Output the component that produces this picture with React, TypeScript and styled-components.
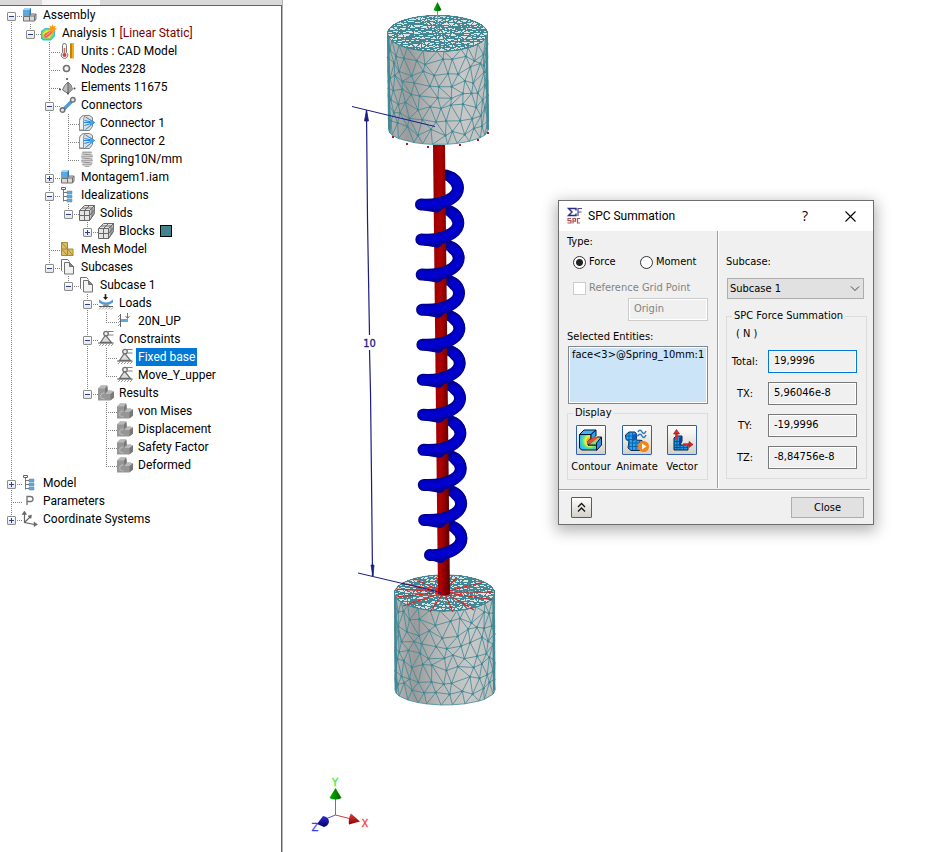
import React, { useState } from "react";
import styled, { createGlobalStyle, css } from "styled-components";

const uiFont = `Roboto, "Open Sans", sans-serif`;
const dialogFont = `"DejaVu Sans Condensed", "DejaVu Sans", sans-serif`;

const GlobalStyle = createGlobalStyle`
  *, *::before, *::after { box-sizing: border-box; }
  body { margin: 0; background: #fff; color: #000; font: 12px/18px ${uiFont}; }
  button, input, select { font: inherit; color: inherit; margin: 0; }
`;

/* ------------------------------------------------------------------ */
/* Page frame                                                          */
/* ------------------------------------------------------------------ */

const Page = styled.div`
  display: flex;
  min-height: 100vh;
`;

const Sidebar = styled.aside`
  flex: none;
  width: 283px;
  display: flex;
  flex-direction: column;
  border-right: 1px solid #b4b4b4;
`;

const TabStrip = styled.div`
  height: 5px;
  background: #d9d9d9;
  padding-left: 42px;
`;

const ActiveTab = styled.div`
  width: 58px;
  height: 5px;
  background: #f5f5f5;
`;

const TreePanel = styled.nav`
  flex: 1;
  border-top: 1px solid #646464;
  border-right: 1px solid #646464;
  padding-left: 2px;
`;

const Stage = styled.main`
  position: relative;
  flex: 1;
  min-width: 0;
  overflow: hidden;
`;

const SceneSvg = styled.svg`
  display: block;
`;

/* ------------------------------------------------------------------ */
/* Icons                                                               */
/* ------------------------------------------------------------------ */

const IconSvg = styled.svg`
  flex: none;
  width: 16px;
  height: 16px;
  display: block;
  overflow: visible;
`;

type IconName =
  | "assembly" | "analysis" | "units" | "node" | "element" | "connectors" | "connector"
  | "spring" | "list" | "solids" | "mesh" | "pages" | "loads" | "load" | "constraint"
  | "result" | "param" | "coords";

const drawings: Record<IconName, React.ReactNode> = {
  assembly: (
    <>
      <path d="M1 3l2-2h6v7l-1 1H1z" fill="#5aa9e0" />
      <path d="M1 3l2-2h6L7.500 3z" fill="#a6d3f3" />
      <path d="M7.500 3L9 1v7L7.500 9z" fill="#2b78b5" />
      <g stroke="#707070" fill="#d9d9d9" strokeLinejoin="round">
        <path d="M1.500 9.500h6v4.500h-6z" />
        <path d="M7.500 9l1.500-2h5v5l-1.500 2h-5z" />
        <path d="M7.500 9h5v5M12.500 9L14 7" fill="none" />
      </g>
    </>
  ),
  analysis: (
    <>
      <path d="M0 6l4-3h8l2 2v6l-4 4.500H2l-2-2z" fill="#2fc0e6" />
      <path d="M1 7l3-3h7l2 3v3l-3.500 4H3l-2-2z" fill="#7edc5a" />
      <path d="M2 8.500l3-3 5-.5 2 3-3.500 5H4z" fill="#f5e34a" />
      <path d="M3 10.500C4 7 7 8 8.500 5.500l3 .5c0 4-3 4-5 6.500-2 1-3.500 0-3.500-2z" fill="#f0685c" />
      <path d="M5 11c1-2 3-2 4.500-4.500" stroke="#f8a89c" fill="none" />
      <path d="M11.500-1l.9 2.600 2.400-1-1 2.400 2.400 1-2.400 1 1 2.400-2.400-1-.9 2.500-.9-2.500-2.400 1 1-2.400-2.400-1 2.400-1-1-2.400 2.400 1z" fill="#f59a1f" />
    </>
  ),
  units: (
    <>
      <path d="M2.500 2.500a2 2 0 014 0v7a3.300 3.300 0 11-4 0z" fill="#f4f4f4" stroke="#777" />
      <path d="M4.500 5v6" stroke="#c86c6c" strokeWidth="1.500" />
      <circle cx="4.500" cy="12" r="2" fill="#d04545" />
      <path d="M10 0h4v15.500h-4z" fill="#f5ad1c" />
      <path d="M10 2h2M10 4h2M10 6h2M10 8h2M10 10h2M10 12h2M10 14h2" stroke="#8a5a00" />
    </>
  ),
  node: <circle cx="6.500" cy="7.500" r="3" fill="#f4f4f4" stroke="#707070" strokeWidth="1.600" />,
  element: (
    <>
      <path d="M8 3Q4 6 2.500 11L8 14.500l4.500-4Q12 6 8 3z" fill="#bdbdbd" stroke="#707070" />
      <path d="M8 3q3.500 3 4.500 7.500L8 14.500z" fill="#a0a0a0" />
      <path d="M8 3v11.500" stroke="#606060" />
      <g fill="#444">
        <circle cx="7" cy="0" r="1" /><circle cx="0" cy="10.500" r="1" />
        <circle cx="14.500" cy="9.500" r="1" /><circle cx="8" cy="14.500" r="1" />
      </g>
    </>
  ),
  connectors: (
    <>
      <path d="M3.500 12.500L12 4" stroke="#4f9bd9" strokeWidth="3.400" />
      <circle cx="2.500" cy="13" r="2.300" fill="#e4e4e4" stroke="#707070" strokeWidth="1.400" />
      <circle cx="12.800" cy="2.800" r="2.300" fill="#e4e4e4" stroke="#707070" strokeWidth="1.400" />
    </>
  ),
  connector: (
    <>
      <path d="M.5 15V5.500Q1.500.500 6 .5h4.500l3 2v9l-3 4H.500z" fill="#dedede" stroke="#808080" />
      <path d="M.5 15V5.500Q1.500.500 6 .5q-1.500 2-1.500 5V15z" fill="#f2f2f2" stroke="#909090" />
      <path d="M15.500 7.500L6.500 2M15.500 7.500L5.500 5.500M15.500 7.500H5M15.500 7.500l-10 3M15.500 7.500l-9 7" stroke="#1e88e5" />
      <path d="M11 4.500l5 3-5 3.500" fill="#4aa0ec" />
    </>
  ),
  spring: (
    <g fill="none" strokeLinecap="round">
      <path d="M3 3l10 1M3 7l10 1M3 11l10 1" stroke="#8c8c8c" strokeWidth="1.200" />
      <path d="M4 1.500h8M3 5.500h10M3 9.500h10M4 13.500h8" stroke="#a8a8a8" strokeWidth="1.800" />
      <path d="M6 15.500h4" stroke="#a8a8a8" />
    </g>
  ),
  list: (
    <>
      <path d="M3.500 3v11.500M3.500 5.500h4M3.500 9.500h4M3.500 13.500h4" stroke="#777" fill="none" />
      <path d="M1.500.5h4v2h-4z" fill="#fff" stroke="#666" />
      <path d="M7 4h5v3H7zM7 8h5v3H7zM7 12h5v3H7z" fill="#5aa9e0" stroke="#5b8fb5" strokeWidth=".5" />
    </>
  ),
  solids: (
    <g stroke="#686868" strokeLinejoin="round">
      <path d="M.5 5.500L5.500.500H15.500L15 9l-4.500 6.500H.500z" fill="#e4e4e4" />
      <path d="M10.500 5.500l5-5L15 9l-4.500 6.500z" fill="#c6c6c6" />
      <path d="M5.500 5.500l5-5M3 3h10v9M.5 5.500h10v10M5.500 5.500v10M.5 10.500h10l4.800-5.500" fill="none" />
    </g>
  ),
  mesh: (
    <g fill="#dbbd63" stroke="#a88a35">
      <path d="M1.500 1.500h6v6.500h5.500v6.500H1.500zM1.500 8h6M7.500 8v6.500M1.500 1.500L7.500 8M1.500 8l6 6.500M7.500 8l5.500 6.500" />
    </g>
  ),
  pages: (
    <g stroke="#707070">
      <path d="M2.500 12.500l-1-1V.5h6l2 2" fill="#fff" />
      <path d="M4.500 3.500h5l4 4v7.500h-9z" fill="#f2f2f2" />
      <path d="M9.500 3.500v4h4z" fill="#888" />
    </g>
  ),
  loads: (
    <>
      <path d="M1 4.500q7 6 14 0v3q-7 5-14 0z" fill="#4f9bd9" />
      <path d="M4.500 11L8 8l3.500 3z" fill="#909090" />
      <path d="M7.500-1v5" stroke="#222" strokeWidth="1.600" />
      <path d="M5 2h5L7.500 5z" fill="#222" />
      <path d="M1 11.500h14" stroke="#555" />
      <path d="M1 14.500l3-3M4 14.500l3-3M7 14.500l3-3M10 14.500l3-3M13 14.500l2-2" stroke="#999" />
    </>
  ),
  load: (
    <>
      <path d="M3.500 1v13" stroke="#666" />
      <path d="M1 4l2-2M1 7l2-2M1 10l2-2M1 13l2-2" stroke="#999" />
      <path d="M4 6h7v3H4z" fill="#5aa9e0" />
      <path d="M10.500 0v5M8.500 3l2 2.500 2-2.500" stroke="#777" fill="none" />
    </>
  ),
  constraint: (
    <>
      <path d="M7.500 4L2.500 11.500h11z" fill="#ddd" stroke="#707070" strokeWidth="1.300" />
      <circle cx="8" cy="2.600" r="2.300" fill="#eee" stroke="#707070" strokeWidth="1.300" />
      <path d="M10 .5h5.500M10 4h5.500" stroke="#808080" />
      <path d="M0 12h15.500" stroke="#606060" />
      <path d="M1 15l3-3M4 15l3-3M7 15l3-3M10 15l3-3M13 15l2.500-2.500" stroke="#999" />
    </>
  ),
  result: (
    <>
      <path d="M0 3.500L3 .500h6l1 5h3.500l2.500 1v6l-4 3H0z" fill="#969696" />
      <path d="M0 3.500L3 .500h6L7 3.500zM7 9l3-3h6l-3 3z" fill="#b9b9b9" />
      <path d="M7 3.500L9.500.500v5L7 9zM12.500 9L16 6.500v6l-3.500 3z" fill="#787878" />
      <path d="M2.500 11.500a3.500 3.500 0 014-3.500M2.500 11.500a3 3 0 004 2" fill="none" stroke="#b0b0b0" strokeWidth="1.500" />
    </>
  ),
  param: <path d="M5 12V3.500h3.500a2.500 2.500 0 010 5H5" fill="none" stroke="#707070" strokeWidth="1.300" />,
  coords: (
    <g stroke="#666" fill="none" strokeWidth="1.200">
      <path d="M2.500 2v9.500l10 2M2.500 11.500L8.500 5.500" />
      <path d="M0 3.500L2.500 0 4.500 3.500zM12 11l3.500 2.500-3.500 2zM6 5l3.500-1-.5 3.500z" fill="#666" strokeWidth=".5" />
    </g>
  ),
};

const Icon = ({ name }: { name: IconName }) => (
  <IconSvg viewBox="0 0 16 16" aria-hidden="true">{drawings[name]}</IconSvg>
);

/* ------------------------------------------------------------------ */
/* Tree                                                                */
/* ------------------------------------------------------------------ */

const dotsDown = "repeating-linear-gradient(to bottom, #808080 0 1px, transparent 1px 2px)";
const dotsAcross = "repeating-linear-gradient(to right, #808080 0 1px, transparent 1px 2px)";

const TreeList = styled.ul`
  list-style: none;
  margin: 0;
  padding: 0;
`;

const TreeRow = styled.div`
  display: flex;
  align-items: center;
  height: 18px;
  white-space: nowrap;
`;

const Guide = styled.span<{ $on: boolean }>`
  flex: none;
  width: 19px;
  height: 18px;
  ${(p) => p.$on && css`background: ${dotsDown} 9px 0 / 1px 18px no-repeat;`}
`;

const Branch = styled.span<{ $up: boolean; $down: boolean }>`
  flex: none;
  display: flex;
  width: 20px;
  height: 18px;
  padding: 6px 0 0 5px;
  background:
    ${dotsAcross} 9px 10px / 11px 1px no-repeat,
    ${dotsDown} 9px ${(p) => (p.$up ? 0 : 10)}px / 1px
      ${(p) => (p.$up ? (p.$down ? 18 : 10) : p.$down ? 8 : 0)}px no-repeat;
`;

const Expander = styled.button`
  width: 9px;
  height: 9px;
  padding: 0;
  border: 1px solid #8c8c8c;
  border-radius: 1px;
  background: linear-gradient(#fff, #e4e4e4);
  display: grid;
  place-items: center;
`;

const ExpanderSvg = styled.svg`
  display: block;
  width: 7px;
  height: 7px;
`;

const Label = styled.span<{ $selected?: boolean }>`
  height: 18px;
  line-height: 18px;
  margin-left: 3px;
  padding: 0 2px;
  ${(p) => p.$selected && css`background: #0078d7; color: #fff;`}
`;

const Suffix = styled.span`
  color: #800000;
`;

const Swatch = styled.span`
  width: 12px;
  height: 12px;
  margin-left: 3px;
  border: 1px solid #000;
  background: #41838f;
`;

type Node = {
  label: string;
  icon: IconName;
  suffix?: string;
  swatch?: boolean;
  selected?: boolean;
  closed?: boolean;
  children?: Node[];
};

const tree: Node[] = [
  {
    label: "Assembly", icon: "assembly", children: [
      {
        label: "Analysis 1", suffix: "[Linear Static]", icon: "analysis", children: [
          { label: "Units : CAD Model", icon: "units" },
          { label: "Nodes 2328", icon: "node" },
          { label: "Elements 11675", icon: "element" },
          {
            label: "Connectors", icon: "connectors", children: [
              { label: "Connector 1", icon: "connector" },
              { label: "Connector 2", icon: "connector" },
              { label: "Spring10N/mm", icon: "spring" },
            ],
          },
          { label: "Montagem1.iam", icon: "assembly", closed: true, children: [] },
          {
            label: "Idealizations", icon: "list", children: [
              {
                label: "Solids", icon: "solids", children: [
                  { label: "Blocks", icon: "solids", swatch: true, closed: true, children: [] },
                ],
              },
            ],
          },
          { label: "Mesh Model", icon: "mesh" },
          {
            label: "Subcases", icon: "pages", children: [
              {
                label: "Subcase 1", icon: "pages", children: [
                  { label: "Loads", icon: "loads", children: [{ label: "20N_UP", icon: "load" }] },
                  {
                    label: "Constraints", icon: "constraint", children: [
                      { label: "Fixed base", icon: "constraint", selected: true },
                      { label: "Move_Y_upper", icon: "constraint" },
                    ],
                  },
                  {
                    label: "Results", icon: "result", children: [
                      { label: "von Mises", icon: "result" },
                      { label: "Displacement", icon: "result" },
                      { label: "Safety Factor", icon: "result" },
                      { label: "Deformed", icon: "result" },
                    ],
                  },
                ],
              },
            ],
          },
        ],
      },
    ],
  },
  { label: "Model", icon: "list", closed: true, children: [] },
  { label: "Parameters", icon: "param" },
  { label: "Coordinate Systems", icon: "coords", closed: true, children: [] },
];

type ItemProps = { node: Node; guides: boolean[]; first: boolean; last: boolean };

const TreeItem = ({ node, guides, first, last }: ItemProps) => {
  const [open, setOpen] = useState(!node.closed);
  return (
    <li>
      <TreeRow>
        {guides.map((on, i) => <Guide key={i} $on={on} />)}
        <Branch $up={!first} $down={!last}>
          {node.children && (
            <Expander
              type="button"
              aria-expanded={open}
              aria-label={`Toggle ${node.label}`}
              onClick={() => setOpen(!open)}
            >
              <ExpanderSvg viewBox="0 0 7 7">
                <path d={open ? "M1 3h5v1H1z" : "M1 3h5v1H1zM3 1h1v5H3z"} fill="#2b3f8f" />
              </ExpanderSvg>
            </Expander>
          )}
        </Branch>
        <Icon name={node.icon} />
        <Label $selected={node.selected}>
          {node.label}
          {node.suffix && <Suffix> {node.suffix}</Suffix>}
        </Label>
        {node.swatch && <Swatch />}
      </TreeRow>
      {open && node.children && node.children.length > 0 && (
        <TreeList>
          {node.children.map((child, i) => (
            <TreeItem
              key={child.label}
              node={child}
              guides={[...guides, !last]}
              first={false}
              last={i === node.children!.length - 1}
            />
          ))}
        </TreeList>
      )}
    </li>
  );
};

/* ------------------------------------------------------------------ */
/* 3D scene                                                            */
/* ------------------------------------------------------------------ */

type Point = [number, number];

const randomFrom = (seed: number) => {
  let s = seed;
  return () => {
    s = (s * 1664525 + 1013904223) % 4294967296;
    return s / 4294967296 - 0.5;
  };
};

const seg = (a: Point, b: Point) =>
  `M${a[0].toFixed(1)} ${a[1].toFixed(1)}L${b[0].toFixed(1)} ${b[1].toFixed(1)}`;

/* Triangulated front of a cylinder wall. */
const wallMesh = (cx: number, cy: number, h: number, shift: number, seed: number) => {
  const rnd = randomFrom(seed);
  const cols = 12;
  const rows = 8;
  const grid: Point[][] = [];
  for (let r = 0; r <= rows; r++) {
    const line: Point[] = [];
    for (let c = 0; c <= cols; c++) {
      const edge = c === 0 || c === cols;
      const rim = r === 0 || r === rows;
      const u = c + (edge ? 0 : (r % 2 ? 0.5 : 0) - 0.25 + rnd() * 0.6);
      const v = (r + (rim ? 0 : rnd() * 0.7)) / rows;
      const t = (u / cols) * Math.PI;
      line.push([cx + shift * v - 50 * Math.cos(t), cy + (18 - 3 * v) * Math.sin(t) + h * v]);
    }
    grid.push(line);
  }
  let d = "";
  for (let r = 0; r <= rows; r++) {
    for (let c = 0; c <= cols; c++) {
      if (c < cols) d += seg(grid[r][c], grid[r][c + 1]);
      if (r < rows) {
        d += seg(grid[r][c], grid[r + 1][c]);
        if (r % 2 === 0 && c > 0) d += seg(grid[r][c], grid[r + 1][c - 1]);
        if (r % 2 === 1 && c < cols) d += seg(grid[r][c], grid[r + 1][c + 1]);
      }
    }
  }
  return { d, dots: grid.slice(1, rows).flatMap((l) => l.slice(1, cols)) };
};

/* Triangulated cap: concentric rings joined to their neighbours. */
const capMesh = (cx: number, cy: number, seed: number) => {
  const rnd = randomFrom(seed);
  const rings: Point[][] = [];
  for (let k = 1; k <= 6; k++) {
    const n = k * 6;
    const ring: Point[] = [];
    for (let i = 0; i < n; i++) {
      const r = (k + (k === 6 ? 0 : rnd() * 0.7)) * (50 / 6);
      const t = ((i + rnd() * 0.6) / n) * Math.PI * 2;
      ring.push([cx + r * Math.cos(t), cy + r * 0.36 * Math.sin(t)]);
    }
    rings.push(ring);
  }
  let d = "";
  rings.forEach((ring, k) => {
    ring.forEach((p, i) => {
      d += seg(p, ring[(i + 1) % ring.length]);
      if (k === 0) {
        d += seg(p, [cx, cy]);
      } else {
        const inner = rings[k - 1];
        const at = (i / ring.length) * inner.length;
        d += seg(p, inner[Math.floor(at) % inner.length]);
        if (at % 1 > 0.05) d += seg(p, inner[Math.ceil(at) % inner.length]);
      }
    });
  });
  return d;
};

type CylinderProps = { cx: number; cy: number; h: number; shift: number; seed: number };

const MeshCylinder = ({ cx, cy, h, shift, seed }: CylinderProps) => {
  const wall = wallMesh(cx, cy, h, shift, seed);
  const b = cy + h;
  return (
    <g>
      <path
        d={`M${cx - 50} ${cy}L${cx - 50 + shift} ${b}A50 15 0 0 0 ${cx + 50 + shift} ${b}L${cx + 50} ${cy}z`}
        fill="url(#wall)"
      />
      <path d={wall.d} stroke="#3f8894" strokeWidth=".8" fill="none" />
      {wall.dots.map((p, i) => <circle key={i} cx={p[0]} cy={p[1]} r="1.200" fill="#3f8894" />)}
      <path d={`M${cx - 49} ${cy + 3}L${cx - 49 + shift} ${b}M${cx + 49} ${cy + 3}L${cx + 49 + shift} ${b}`} stroke="#3f8894" strokeWidth="2" />
      <ellipse cx={cx} cy={cy} rx="50" ry="18" fill="#e2e2e2" stroke="#3f8894" />
      <path d={capMesh(cx, cy, seed + 7)} stroke="#3f8894" strokeWidth="1.100" fill="none" shapeRendering="crispEdges" />
    </g>
  );
};

const turns = Array.from({ length: 11 }, (_, i) => {
  const x = i * 0.35;
  const y = i * 35.05;
  const left = i === 10 ? 430 : 421 + x;
  const start = i === 0 ? "M446 175" : `M${440 + x} ${172 + y}L${447 + x} ${175 + y}`;
  return {
    top: `${start}C${453 + x} ${177 + y} ${458 + x} ${181 + y} ${458 + x} ${188 + y}`,
    front:
      `M${452 + x} ${178 + y}C${456 + x} ${181 + y} ${458 + x} ${184 + y} ${458 + x} ${188 + y}` +
      `C${458 + x} ${196 + y} ${448 + x} ${202 + y} ${438 + x} ${203.5 + y}Q${431 + x} ${205 + y} ${left} ${204.5 + y}`,
    back: `M${left + 4} ${205 + y}L${437 + x} ${207 + y}`,
  };
});

const rimRed: Point[] = [
  [403, 606], [430, 612], [453, 612], [474, 610], [493, 600], [494, 592], [484, 582],
  [457, 577], [436, 577], [414, 579], [402, 583], [396, 589], [396, 597],
];

const Scene = () => (
  <SceneSvg width="669" height="852" viewBox="283 0 669 852" role="img" aria-label="Meshed spring assembly">
    <defs>
      <linearGradient id="wall">
        <stop offset="0" stopColor="#b5b5b5" />
        <stop offset=".2" stopColor="#9b9b9b" />
        <stop offset=".45" stopColor="#b9b9b9" />
        <stop offset=".75" stopColor="#c8c8c8" />
        <stop offset="1" stopColor="#bdbdbd" />
      </linearGradient>
      <linearGradient id="rod" gradientUnits="userSpaceOnUse" x1="433" x2="450" y1="300" y2="300">
        <stop offset="0" stopColor="#960000" />
        <stop offset=".45" stopColor="#b00000" />
        <stop offset="1" stopColor="#5a0000" />
      </linearGradient>
      <linearGradient id="green"><stop stopColor="#00b400" /><stop offset="1" stopColor="#005f00" /></linearGradient>
      <linearGradient id="red" x2="0" y2="1"><stop stopColor="#e04040" /><stop offset="1" stopColor="#8a0000" /></linearGradient>
      <linearGradient id="blue" x2="0" y2="1"><stop stopColor="#3030c8" /><stop offset="1" stopColor="#000070" /></linearGradient>
    </defs>

    <MeshCylinder cx={437.5} cy={33.5} h={96} shift={1} seed={11} />
    <g fill="#b01818">
      {[[392, 136], [406, 143], [427, 146], [459, 144], [477, 139], [487, 132]].map(([x, y]) => (
        <rect key={x} x={x} y={y} width="2" height="2" />
      ))}
    </g>
    <path d="M437.500 10v24" stroke="#1ee01e" />
    <path d="M437.500 2l4 8q-4 2.500-8 0z" fill="url(#green)" />

    <MeshCylinder cx={444.5} cy={593} h={97} shift={0.5} seed={29} />
    <g stroke="#f01818" strokeWidth="1.200" strokeDasharray="9 1">
      {rimRed.map(([x, y]) => <path key={`${x}-${y}`} d={`M444 592L${x} ${y}`} />)}
    </g>

    <g fill="none" strokeLinecap="round">
      {turns.map((t, i) => <path key={i} d={t.top} stroke="#00008e" strokeWidth="11" />)}
    </g>
    <path d="M433 145h12l5 449q-6 3-12 0z" fill="url(#rod)" />
    <g fill="none" strokeLinecap="round">
      {turns.map((t, i) => (
        <g key={i}>
          <path d={t.back} stroke="#000098" strokeWidth="11" />
          <path d={t.front} stroke="#000090" strokeWidth="12" />
          <path d={t.front} stroke="#0000ae" strokeWidth="10" />
          <path d={t.front} stroke="#0000bf" strokeWidth="8" />
          <path d={t.front} stroke="#0000cf" strokeWidth="5" />
        </g>
      ))}
    </g>

    <g stroke="#1c1c84" fill="none">
      <path d="M352 106.500L435 126.500M358 573L441 592.500" />
      <path d="M366.500 110L367.500 219L369.500 335M369.500 350L370.500 392L371.500 478L372.500 576" strokeWidth="1.200" />
      <path d="M366.500 110l2 11h-4zM371 565h3l-1 11z" fill="#1c1c84" strokeWidth=".8" />
    </g>
    <text x="369.500" y="347" textAnchor="middle" fontFamily={dialogFont} fontSize="11" fill="#1c1c84" stroke="#1c1c84" strokeWidth=".3">10</text>

    <path d="M335.500 815V798" stroke="#20b020" />
    <path d="M335.500 815l16 4" stroke="#d04040" />
    <path d="M335.500 815l-10 4" stroke="#5050e0" />
    <path d="M335.500 788l6 10q-6 3-12 0z" fill="url(#green)" />
    <path d="M360 821.500l-9-8q-3 5-2 11z" fill="url(#red)" />
    <path d="M317 824l6-8q6 1 6 6-1 4-5 5z" fill="url(#blue)" />
    <g fontFamily={dialogFont} fontSize="11" textAnchor="middle">
      <text x="335" y="786" fill="#30f030" stroke="#30f030" strokeWidth=".3">Y</text>
      <text x="365" y="827" fill="#ff3c3c" stroke="#ff3c3c" strokeWidth=".3">X</text>
      <text x="315" y="831" fill="#3c3cff" stroke="#3c3cff" strokeWidth=".3">Z</text>
    </g>
  </SceneSvg>
);

/* ------------------------------------------------------------------ */
/* SPC Summation dialog                                                */
/* ------------------------------------------------------------------ */

const Window = styled.section`
  position: absolute;
  left: 275px;
  top: 200px;
  width: 316px;
  border: 1px solid #6e6e6e;
  background: #f0f0f0;
  box-shadow: 0 4px 14px 2px rgba(0, 0, 0, 0.3);
  font: 11px/14px ${dialogFont};
`;

const TitleBar = styled.header`
  display: flex;
  align-items: center;
  height: 30px;
  padding: 0 8px;
  background: #fff;
`;

const Title = styled.h1`
  flex: 1;
  margin: 0 0 0 5px;
  font: 12px/18px ${uiFont};
`;

const TitleButton = styled.button`
  width: 30px;
  height: 28px;
  margin-left: 15px;
  padding: 0;
  border: 0;
  background: none;
  display: grid;
  place-items: center;
  font: 14px/18px "Open Sans", sans-serif;
`;

const Columns = styled.div`
  display: grid;
  grid-template-columns: 159px 1fr;
  padding-bottom: 1px;
`;

const LeftColumn = styled.div`
  padding: 4px 9px 8px 8px;
  border-right: 1px solid #a0a0a0;
`;

const RightColumn = styled.div`
  padding: 24px 6px 8px 7px;
  border-left: 1px solid #fff;
`;

const Caption = styled.div`
  height: 14px;
`;

const RadioRow = styled.div`
  display: grid;
  grid-template-columns: 67px 1fr;
  margin: 6px 0 12px 6px;
`;

const Choice = styled.label<{ $disabled?: boolean }>`
  display: flex;
  align-items: center;
  gap: 3px;
  height: 14px;
  white-space: nowrap;
  color: ${(p) => (p.$disabled ? "#838383" : "#000")};
`;

const Radio = styled.input`
  appearance: none;
  width: 13px;
  height: 13px;
  border: 1px solid #333;
  border-radius: 50%;
  background: #fff;
  &:checked { background: radial-gradient(circle, #222 0 3px, #fff 4px); }
`;

const Check = styled.input`
  appearance: none;
  width: 13px;
  height: 13px;
  border: 1px solid #ccc;
  background: #fff;
`;

const CheckRow = styled.div`
  padding-left: 6px;
`;

const OriginField = styled.input`
  display: block;
  width: 80px;
  height: 23px;
  margin: 3px 0 9px auto;
  padding: 0 5px 3px;
  border: 1px solid #ccc;
  background: #f0f0f0;
  box-shadow: inset 0 0 0 1px #fff;
  color: #838383;
`;

const EntityList = styled.ul`
  list-style: none;
  height: 58px;
  margin: 2px 0 2px 1px;
  padding: 1px 3px;
  border: 1px solid #828790;
  background: #cce4f7;
  box-shadow: inset 0 0 0 1px #fff;
  white-space: nowrap;
`;

const Group = styled.fieldset`
  min-width: 0;
  margin: 0;
  border: 1px solid #dcdcdc;
  padding: 0;
`;

const Legend = styled.legend`
  margin-left: 5px;
  padding: 0 2px;
  line-height: 14px;
`;

const DisplayRow = styled.div`
  display: grid;
  grid-template-columns: 46px 46px 44px;
  padding: 5px 0;
`;

const DisplayItem = styled.label`
  display: flex;
  flex-direction: column;
  align-items: center;
  gap: 5px;
`;

const ToolButton = styled.button<{ $size: number }>`
  width: ${(p) => p.$size}px;
  height: ${(p) => p.$size}px;
  padding: 0;
  border: 1px solid #2f60b0;
  border-radius: 1px;
  background: linear-gradient(#fff, #d4d0c8);
  display: grid;
  place-items: center;
`;

const SubcaseSelectWrap = styled.div`
  display: flex;
  align-items: center;
  height: 21px;
  margin: 9px 3px 10px 1px;
  border: 1px solid #adadad;
  background: #e1e1e1;
`;

const SubcaseSelect = styled.select`
  appearance: none;
  flex: 1;
  min-width: 0;
  height: 19px;
  padding: 0 2px;
  border: 0;
  background: none;
`;

const Chevron = styled.svg`
  width: 10px;
  height: 6px;
  margin-right: 3px;
`;

const Unit = styled.div`
  padding: 4px 0 9px 9px;
`;

const ResultGrid = styled.div`
  display: grid;
  grid-template-columns: 36px 89px;
  row-gap: 9px;
  column-gap: 5px;
  padding-bottom: 9px;
`;

const ResultLabel = styled.label`
  align-self: center;
  text-align: center;
  white-space: nowrap;
`;

const ResultField = styled.input<{ $focus?: boolean }>`
  width: 89px;
  height: 23px;
  padding: 0 5px 2px;
  border: 1px solid ${(p) => (p.$focus ? "#0078d7" : "#7a7a7a")};
  background: #f0f0f0;
  box-shadow: inset 0 0 0 1px #fff;
`;

const Footer = styled.footer`
  display: flex;
  justify-content: space-between;
  align-items: center;
  margin-right: 3px;
  padding: 7px 6px 6px 12px;
  border-top: 1px solid #a0a0a0;
  box-shadow: inset 0 1px #fff;
`;

const CloseButton = styled.button`
  width: 73px;
  height: 21px;
  padding: 0;
  border: 1px solid #adadad;
  background: #e1e1e1;
`;

const SpcIcon = () => (
  <IconSvg viewBox="0 0 16 16" aria-hidden="true">
    <path d="M9 2.500V.5H1.500L5 4 1.500 7.500H9v-2" fill="none" stroke="#2b2b8c" strokeWidth="1.400" />
    <path d="M11 8V.5h4M11 4h3.500" fill="none" stroke="#4a4a9c" strokeWidth="1.200" />
    <path d="M4 10.500H1v2.200h3V15H.5M6 15.500v-5h2.500v2.700H6M13 10.500h-2.500V15H13" fill="none" stroke="#b05050" strokeWidth="1.200" />
  </IconSvg>
);

const ToolSvg = styled.svg`
  display: block;
  width: 28px;
  height: 28px;
`;

const ContourArt = () => (
  <ToolSvg viewBox="0 0 28 28">
    <defs>
      <radialGradient id="heat" gradientUnits="userSpaceOnUse" cx="13" cy="15" r="12">
        <stop offset="0" stopColor="#f04020" />
        <stop offset=".2" stopColor="#ff9a1e" />
        <stop offset=".4" stopColor="#f2f23a" />
        <stop offset=".6" stopColor="#5be08a" />
        <stop offset=".8" stopColor="#28c8f0" />
        <stop offset="1" stopColor="#2ea0f0" />
      </radialGradient>
    </defs>
    <g stroke="#0a1230" strokeLinejoin="round">
      <path d="M2.500 8.500h11.500v4l-3 3v3.500h8.500v5H4.500l-2-2z" fill="url(#heat)" />
      <path d="M2.500 8.500L7 4h12l-5 4.500z" fill="#3fb4f5" />
      <path d="M14 8.500L19 4v6l-5 4z" fill="#2ea0f0" />
      <path d="M11 19l9-8h4.500L19.500 19z" fill="#7ee07a" />
      <path d="M19.500 17l5-6v8l-5 5.500z" fill="#2f8ee8" />
    </g>
    <path d="M12 17l7.500-6" stroke="#f04a30" strokeWidth="3" />
  </ToolSvg>
);

const AnimateArt = () => (
  <ToolSvg viewBox="0 0 28 28">
    <path d="M2.500 9L6 6h6l2 3-1 5 6 .5 1 3v5l-3 2H8l-3-2.500 1-7-3-1.500z" fill="#22a4ee" stroke="#0a2a5c" />
    <path d="M3 10h10M3 13.500h9M6 17h13M6 20.500h13M6 6.500v16M9.500 6v18M13 15v9M16.500 15v9" stroke="#0d5fa4" strokeWidth=".9" />
    <path d="M9.500 9l4-1.500-1 6.500-2.500 1z" fill="#1550d0" />
    <path d="M15 6q2-3.500 4 0t4-1M15 10q2-3.500 4 0t4-1" stroke="#2878c0" strokeWidth="1.500" fill="none" />
    <circle cx="20.500" cy="20.500" r="5.500" fill="#f58412" />
    <path d="M19 17.500l4.500 3-4.500 3z" fill="#fff" />
  </ToolSvg>
);

const VectorArt = () => (
  <ToolSvg viewBox="0 0 28 28">
    <path d="M6 12l2-2h6v5l-2 4h8v5H6z" fill="#1e98e4" stroke="#0a1a3c" />
    <path d="M6 15.500h6M6 19h8M6 21.500h14M9 11v13M12 19v5M15.500 19v5" stroke="#0a4a84" strokeWidth=".9" />
    <path d="M11 12l3-2v5l-3 5z" fill="#1038a0" />
    <path d="M8.500 14V7.500M15 18.500h7" stroke="#e02828" strokeWidth="2.400" />
    <path d="M8.500 3.500l3 4.500h-6zM25 18.500L21 21.500v-6z" fill="#e02828" stroke="#8a1010" strokeWidth=".6" />
  </ToolSvg>
);

const results = [
  { id: "total", label: "Total:", value: "19,9996", focus: true },
  { id: "tx", label: "TX:", value: "5,96046e-8" },
  { id: "ty", label: "TY:", value: "-19,9996" },
  { id: "tz", label: "TZ:", value: "-8,84756e-8" },
];

const tools = [
  { id: "contour", label: "Contour", art: <ContourArt /> },
  { id: "animate", label: "Animate", art: <AnimateArt /> },
  { id: "vector", label: "Vector", art: <VectorArt /> },
];

const SummationDialog = () => (
  <Window role="dialog" aria-labelledby="spc-title">
    <TitleBar>
      <SpcIcon />
      <Title id="spc-title">SPC Summation</Title>
      <TitleButton type="button">?</TitleButton>
      <TitleButton type="button" aria-label="Close window">
        <svg width="11" height="11" viewBox="0 0 11 11">
          <path d="M.5.5l10 10M10.500.5l-10 10" stroke="#000" strokeWidth="1.100" />
        </svg>
      </TitleButton>
    </TitleBar>
    <Columns>
      <LeftColumn>
        <Caption>Type:</Caption>
        <RadioRow>
          <Choice><Radio type="radio" name="type" defaultChecked />Force</Choice>
          <Choice><Radio type="radio" name="type" />Moment</Choice>
        </RadioRow>
        <CheckRow>
          <Choice $disabled><Check type="checkbox" disabled />Reference Grid Point</Choice>
        </CheckRow>
        <OriginField aria-label="Reference grid point" defaultValue="Origin" disabled />
        <Caption id="entities">Selected Entities:</Caption>
        <EntityList aria-labelledby="entities">
          <li>face&lt;3&gt;@Spring_10mm:1</li>
        </EntityList>
        <Group>
          <Legend>Display</Legend>
          <DisplayRow>
            {tools.map((t) => (
              <DisplayItem key={t.id} htmlFor={t.id}>
                <ToolButton id={t.id} type="button" $size={30}>{t.art}</ToolButton>
                {t.label}
              </DisplayItem>
            ))}
          </DisplayRow>
        </Group>
      </LeftColumn>
      <RightColumn>
        <label htmlFor="subcase">Subcase:</label>
        <SubcaseSelectWrap>
          <SubcaseSelect id="subcase" defaultValue="1">
            <option value="1">Subcase 1</option>
          </SubcaseSelect>
          <Chevron viewBox="0 0 10 6" aria-hidden="true">
            <path d="M1 .5l4 4 4-4" fill="none" stroke="#444" />
          </Chevron>
        </SubcaseSelectWrap>
        <Group>
          <Legend>SPC Force Summation</Legend>
          <Unit>( N )</Unit>
          <ResultGrid>
            {results.map((r) => (
              <React.Fragment key={r.id}>
                <ResultLabel htmlFor={r.id}>{r.label}</ResultLabel>
                <ResultField id={r.id} readOnly value={r.value} $focus={r.focus} />
              </React.Fragment>
            ))}
          </ResultGrid>
        </Group>
      </RightColumn>
    </Columns>
    <Footer>
      <ToolButton type="button" $size={21} aria-label="Collapse">
        <svg width="9" height="11" viewBox="0 0 9 11">
          <path d="M1 5l3.500-3.500L8 5M1 9.500L4.500 6 8 9.500" fill="none" stroke="#111" strokeWidth="1.300" />
        </svg>
      </ToolButton>
      <CloseButton type="button">Close</CloseButton>
    </Footer>
  </Window>
);

export default function App() {
  return (
    <Page>
      <GlobalStyle />
      <Sidebar>
        <TabStrip><ActiveTab /></TabStrip>
        <TreePanel aria-label="Model tree">
          <TreeList>
            {tree.map((node, i) => (
              <TreeItem key={node.label} node={node} guides={[]} first={i === 0} last={i === tree.length - 1} />
            ))}
          </TreeList>
        </TreePanel>
      </Sidebar>
      <Stage>
        <Scene />
        <SummationDialog />
      </Stage>
    </Page>
  );
}
